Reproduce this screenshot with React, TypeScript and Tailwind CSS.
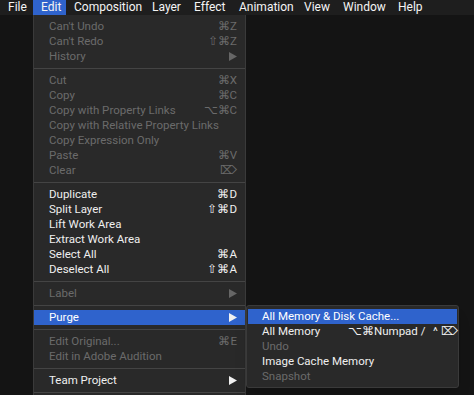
import React from 'react';

type Item =
  | { kind: 'sep' }
  | { kind: 'item'; label: string; shortcut?: string; disabled?: boolean; submenu?: boolean; active?: boolean };

const editItems: Item[] = [
  { kind: 'item', label: "Can't Undo", shortcut: '⌘Z', disabled: true },
  { kind: 'item', label: "Can't Redo", shortcut: '⇧⌘Z', disabled: true },
  { kind: 'item', label: 'History', disabled: true, submenu: true },
  { kind: 'sep' },
  { kind: 'item', label: 'Cut', shortcut: '⌘X', disabled: true },
  { kind: 'item', label: 'Copy', shortcut: '⌘C', disabled: true },
  { kind: 'item', label: 'Copy with Property Links', shortcut: '⌥⌘C', disabled: true },
  { kind: 'item', label: 'Copy with Relative Property Links', disabled: true },
  { kind: 'item', label: 'Copy Expression Only', disabled: true },
  { kind: 'item', label: 'Paste', shortcut: '⌘V', disabled: true },
  { kind: 'item', label: 'Clear', shortcut: '⌦', disabled: true },
  { kind: 'sep' },
  { kind: 'item', label: 'Duplicate', shortcut: '⌘D' },
  { kind: 'item', label: 'Split Layer', shortcut: '⇧⌘D' },
  { kind: 'item', label: 'Lift Work Area' },
  { kind: 'item', label: 'Extract Work Area' },
  { kind: 'item', label: 'Select All', shortcut: '⌘A' },
  { kind: 'item', label: 'Deselect All', shortcut: '⇧⌘A' },
  { kind: 'sep' },
  { kind: 'item', label: 'Label', disabled: true, submenu: true },
  { kind: 'sep' },
  { kind: 'item', label: 'Purge', submenu: true, active: true },
  { kind: 'sep' },
  { kind: 'item', label: 'Edit Original...', shortcut: '⌘E', disabled: true },
  { kind: 'item', label: 'Edit in Adobe Audition', disabled: true },
  { kind: 'sep' },
  { kind: 'item', label: 'Team Project', submenu: true },
  { kind: 'sep' },
];

// fixed widths so the titles land where the real menu bar puts them
const menuBar = [
  { label: 'File', w: 'w-[33px]' },
  { label: 'Edit', w: 'w-[33px]' },
  { label: 'Composition', w: 'w-[78px]' },
  { label: 'Layer', w: 'w-[42px]' },
  { label: 'Effect', w: 'w-[45px]' },
  { label: 'Animation', w: 'w-[65px]' },
  { label: 'View', w: 'w-[39px]' },
  { label: 'Window', w: 'w-[55px]' },
  { label: 'Help', w: 'w-[45px]' },
];

const Arrow = ({ dim }: { dim?: boolean }) => (
  <svg width="8" height="9" viewBox="0 0 8 9" className={dim ? 'text-[#666]' : 'text-[#f0f0f0]'}>
    <path d="M0 0 L8 4.5 L0 9 Z" fill="currentColor" />
  </svg>
);

export default function App() {
  return (
    <div
      className="relative w-[474px] h-[395px] overflow-hidden bg-[#141414] text-[11.5px] leading-[15px]"
      style={{ fontFamily: 'Roboto, "Noto Sans", sans-serif' }}
    >
      {/* Menu bar */}
      <div className="flex h-[15px] bg-[#1e1e1e] text-[12px] text-[#f4f4f4]">
        {menuBar.map((m) => (
          <div
            key={m.label}
            className={`${m.w} shrink-0 pl-[8px] h-[15px] leading-[15px] ${m.label === 'Edit' ? 'bg-[#2f63cc]' : ''}`}
          >
            {m.label}
          </div>
        ))}
      </div>

      {/* Edit menu */}
      <div className="absolute left-[33px] top-[15px] w-[213px] pt-[4px] bg-[#292929] border-x border-[#3a3a3a]">
        {editItems.map((it, i) =>
          it.kind === 'sep' ? (
            <div key={i} className="h-[9px] flex items-center">
              <div className="h-px w-full bg-[#444]" />
            </div>
          ) : (
            <div
              key={i}
              className={`flex h-[15px] items-center justify-between pl-[15px] pr-[8px] ${
                it.active ? 'bg-[#2f63cc] text-white' : it.disabled ? 'text-[#6b6b6b]' : 'text-[#efefef]'
              }`}
            >
              <span className="whitespace-nowrap">{it.label}</span>
              {it.submenu ? <Arrow dim={it.disabled} /> : it.shortcut ? <span>{it.shortcut}</span> : null}
            </div>
          )
        )}
      </div>

      {/* Purge submenu */}
      <div className="absolute left-[246px] top-[305px] w-[213px] pt-[3px] pb-[3px] bg-[#292929] border border-[#3a3a3a] rounded-[3px] shadow-lg">
        <div className="mx-[1px] flex h-[15px] items-center bg-[#2f63cc] pl-[14px] text-white">
          All Memory &amp; Disk Cache...
        </div>
        <div className="flex h-[15px] items-center pl-[15px] text-[#efefef] whitespace-nowrap">
          <span className="w-[86px] shrink-0">All Memory</span>
          <span className="w-[85px] shrink-0">⌥⌘Numpad /</span>
          <span>^ ⌦</span>
        </div>
        <div className="flex h-[15px] items-center pl-[15px] text-[#6b6b6b]">Undo</div>
        <div className="flex h-[15px] items-center pl-[15px] text-[#efefef]">Image Cache Memory</div>
        <div className="flex h-[15px] items-center pl-[15px] text-[#6b6b6b]">Snapshot</div>
      </div>
    </div>
  );
}
